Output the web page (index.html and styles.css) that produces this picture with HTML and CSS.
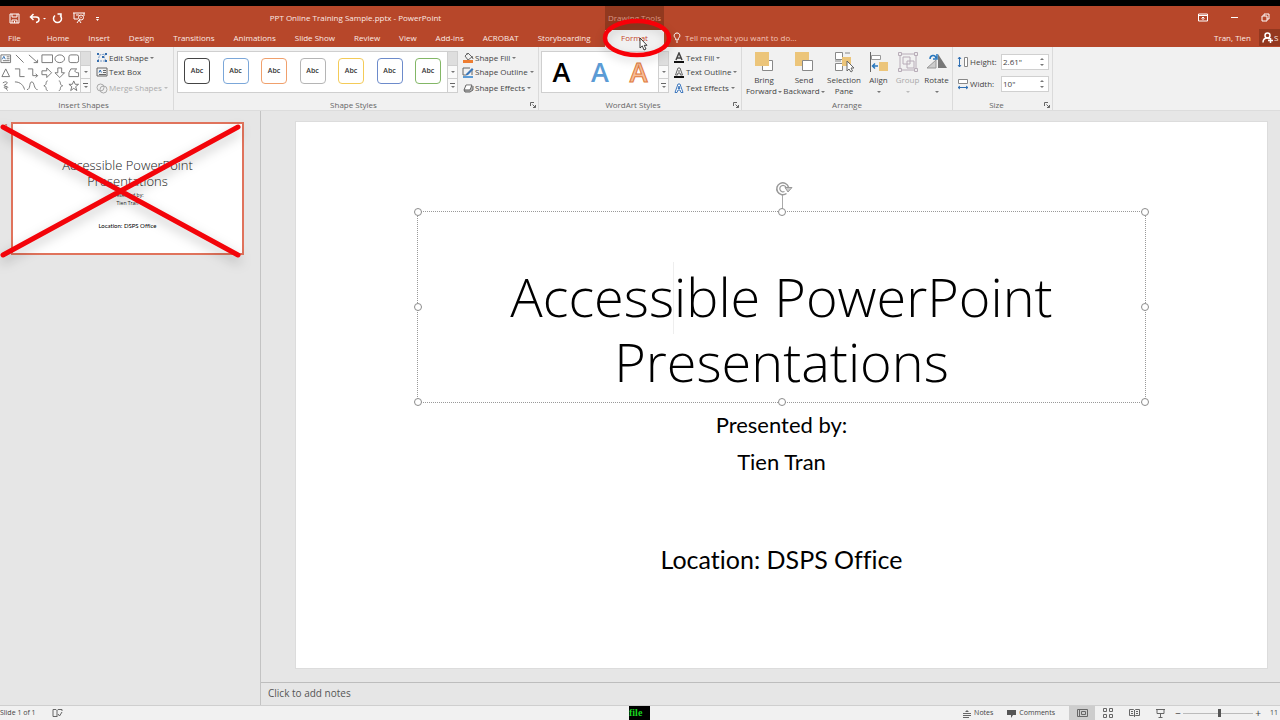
FILE: index.html
```html
<!DOCTYPE html>
<html lang="en">
<head>
<meta charset="utf-8">
<title>PPT Online Training Sample.pptx - PowerPoint</title>
<link rel="stylesheet" href="styles.css">
</head>
<body>
<div class="app">
  <header class="header">
    <div class="header-main">
      <div class="titlebar">
        <div class="quick">
          <button aria-label="Save"><svg width="11" height="11" viewBox="0 0 11 11"><path d="M1 1h9v9H1zM3 1v3h5V1M3 10V7h5v3" class="w"/><path d="M5 8h1v2H5z" fill="#fff"/></svg></button>
          <button class="undo" aria-label="Undo"><svg width="18" height="11" viewBox="0 0 18 11"><path d="M4.500 1 1.500 4l3 3M2 4h5c4 0 4 5 0 5.500" class="w b"/><path d="M14 5h3l-1.500 1.500z" fill="#fff"/></svg></button>
          <button class="redo" aria-label="Redo"><svg width="11" height="11" viewBox="0 0 11 11"><path d="M3 2.500a4 4 0 1 0 5 0M5.500 1h3.500v3.500" class="w b"/></svg></button>
          <button class="present" aria-label="Start presentation"><svg width="12" height="12" viewBox="0 0 12 12"><path d="M0 1h12M1 1v6h4M11 1v3M4 11l2-3 2 3M3 3h3" class="w"/><circle cx="8" cy="5.500" r="2.500" class="w"/><path d="M7.500 4.500v2l1.500-1z" fill="#fff"/></svg></button>
          <button aria-label="Customize toolbar"><svg width="7" height="9" viewBox="0 0 7 9"><path d="M2 3.500h3" class="w"/><path d="M2 5h3L3.500 7z" fill="#fff"/></svg></button>
        </div>
        <span class="doc-title">PPT Online Training Sample.pptx - PowerPoint</span>
      </div>
      <nav class="tabs">
        <button class="file">File</button><button>Home</button><button>Insert</button><button>Design</button><button>Transitions</button><button>Animations</button><button>Slide Show</button><button>Review</button><button>View</button><button>Add-ins</button><button>ACROBAT</button><button>Storyboarding</button>
      </nav>
    </div>
    <div class="context">
      <span class="context-label">Drawing Tools</span>
      <button class="format">Format</button>
      <svg class="ring" width="72" height="48" viewBox="0 0 72 48"><ellipse cx="36" cy="21" rx="32" ry="17" fill="none" stroke="#f80008" stroke-width="4.500"/></svg>
      <svg class="pointer" width="9" height="14" viewBox="0 0 9 14"><path d="M1 1v10l2.300-2.100L5 13l2-1-1.800-3.700H8z" fill="#fff" stroke="#111" stroke-width=".8"/></svg>
    </div>
    <div class="header-side">
      <div class="window-buttons">
        <button aria-label="Ribbon display options"><svg width="10" height="9" viewBox="0 0 10 9"><path d="M.5 1h9v7h-9zM.5 2.500h9M5 7V4M3.500 5.500 5 4l1.500 1.500" class="w"/></svg></button>
        <button aria-label="Minimize"><svg width="9" height="9" viewBox="0 0 9 9"><path d="M1 4.500h7" class="w"/></svg></button>
        <button aria-label="Restore"><svg width="9" height="9" viewBox="0 0 9 9"><path d="M1 3h5v5H1zM3 3V1h5v5H6" class="w"/></svg></button>
      </div>
      <div class="account-row">
        <button class="tell"><svg width="8" height="11" viewBox="0 0 8 11"><path d="M2.800 8V6.500C0 4.500 1 1 4 1s4 3.500 1.200 5.500V8zM3 10h2" class="w"/></svg>Tell me what you want to do...</button>
        <span class="user">Tran, Tien</span>
        <button class="share" aria-label="Share"><svg width="11" height="11" viewBox="0 0 11 11"><circle cx="5.500" cy="3.500" r="2.500" class="w b"/><path d="M1 10.500c0-3 2-4.500 4.500-4.500 1 0 1.500.5 2 1M8.500 6v5M6 8.500h5" class="w b"/></svg>S</button>
      </div>
    </div>
  </header>

  <section class="ribbon" aria-label="Format">
    <div class="group insert">
      <div class="group-body">
        <div class="gallery shapes">
          <div class="shape-grid">
            <button aria-label="Text box"><svg viewBox="0 0 14 14"><path d="M2 3h10v8H2zM8 5h3M8 7h3M4 9h7"/><path d="m3.500 7.500 1.500-3 1.500 3" class="blue"/></svg></button>
            <button aria-label="Line"><svg viewBox="0 0 14 14"><path d="m3 3 8 8"/></svg></button>
            <button aria-label="Arrow"><svg viewBox="0 0 14 14"><path d="m3 3 9 8M12 8v3H8"/></svg></button>
            <button aria-label="Rectangle"><svg viewBox="0 0 14 14"><path d="M2 3h11v8H2z"/></svg></button>
            <button aria-label="Oval"><svg viewBox="0 0 14 14"><ellipse cx="7" cy="7" rx="5" ry="4"/></svg></button>
            <button aria-label="Rounded rectangle"><svg viewBox="0 0 14 14"><rect x="2" y="3" width="10" height="8" rx="2"/></svg></button>
            <button aria-label="Triangle"><svg viewBox="0 0 14 14"><path d="m7 3 4 8H3z"/></svg></button>
            <button aria-label="Elbow connector"><svg viewBox="0 0 14 14"><path d="M2 3h5v8h5"/></svg></button>
            <button aria-label="Elbow arrow"><svg viewBox="0 0 14 14"><path d="M2 3h5v7h5M10 8l2 2-2 2"/></svg></button>
            <button aria-label="Right arrow"><svg viewBox="0 0 14 14"><path d="M2 5h5V2l5 5-5 5V9H2z"/></svg></button>
            <button aria-label="Down arrow"><svg viewBox="0 0 14 14"><path d="M5 2h4v5h3l-5 5-5-5h3z"/></svg></button>
            <button aria-label="Freeform"><svg viewBox="0 0 14 14"><path d="M4 3h6c-3 2-2 4 2 4v4H2V7z"/></svg></button>
            <button aria-label="Scribble"><svg viewBox="0 0 14 14"><path d="M4 4c5-3 6 1 2 2-3 2 4 1 3 3s-5 0-3-1 1 3 3 4"/></svg></button>
            <button aria-label="Arc"><svg viewBox="0 0 14 14"><path d="M2 3c6 0 9 4 10 8"/></svg></button>
            <button aria-label="Curve"><svg viewBox="0 0 14 14"><path d="M1 11c4 0 2-8 5-8s2 8 6 8"/></svg></button>
            <button aria-label="Left brace"><svg viewBox="0 0 14 14"><path d="M8 2C5 2 8 6 4 7c4 1 1 5 4 5"/></svg></button>
            <button aria-label="Right brace"><svg viewBox="0 0 14 14"><path d="M6 2c3 0 0 4 4 5-4 1-1 5-4 5"/></svg></button>
            <button aria-label="Star"><svg viewBox="0 0 14 14"><path d="m7 2 1.500 3.500H12L9 8l1.200 4L7 9.700 3.800 12 5 8 2 5.500h3.500z"/></svg></button>
          </div>
          <div class="scroll"><button class="off" aria-label="Previous row"></button><button aria-label="Next row"><i></i></button><button class="more" aria-label="More shapes"><i></i></button></div>
        </div>
        <div class="commands">
          <button><svg width="12" height="11" viewBox="0 0 12 11"><path d="M2 9 3.500 3l6-1L8 5l2 4z" fill="none" stroke="#6d93c2" stroke-dasharray="2 1"/><path d="M1 1h2v2H1zM9 1h2v2H9zM1 8h2v2H1zM9 8h2v2H9zM6 4h2v2H6z" fill="#356eae"/></svg>Edit Shape<i></i></button>
          <button><svg width="12" height="11" viewBox="0 0 12 11"><path d="M1 1h10v8H1zM7 3.500h3M7 5.500h3M3 7.500h7" class="g"/><path d="m3 5.500 1.200-2.500 1.200 2.500" class="bl"/></svg>Text Box</button>
          <button class="disabled" disabled><svg width="12" height="11" viewBox="0 0 12 11"><circle cx="4.500" cy="4.500" r="3.500" class="lg"/><circle cx="7.500" cy="6.500" r="3.500" class="lg"/></svg>Merge Shapes<i></i></button>
        </div>
      </div>
      <div class="group-label"><span>Insert Shapes</span></div>
    </div>

    <div class="group styles">
      <div class="group-body">
        <div class="gallery">
          <div class="style-items">
            <button class="st black">Abc</button><button class="st blue1">Abc</button><button class="st orange">Abc</button><button class="st grey">Abc</button><button class="st gold">Abc</button><button class="st blue2">Abc</button><button class="st green">Abc</button>
          </div>
          <div class="scroll"><button class="off" aria-label="Previous row"></button><button aria-label="Next row"><i></i></button><button class="more" aria-label="More styles"><i></i></button></div>
        </div>
        <div class="commands">
          <button><svg width="12" height="11" viewBox="0 0 12 11"><path d="m3 4 3-3 4 4-4 3zM5 3V1M10 4l1 3" class="g"/><path d="M1 8h10v3H1z" fill="#ed7d31"/></svg>Shape Fill<i></i></button>
          <button><svg width="12" height="11" viewBox="0 0 12 11"><path d="M8 1H1v7h3M10 3v5" class="g"/><path d="m4 7 6-6 1.500 1.500L6 8l-2 .5z" fill="#3c77b8"/><path d="M1 9h10v2H1z" fill="#5b9bd5"/></svg>Shape Outline<i></i></button>
          <button><svg width="12" height="11" viewBox="0 0 12 11"><path d="m2 7 2-5h6L8 7zM2 7l1 2h5l3-2V3" fill="#b5b5b5" stroke="#666"/><path d="m3 6 1.500-3.500H9L7.500 6z" fill="#fff"/></svg>Shape Effects<i></i></button>
        </div>
      </div>
      <div class="group-label"><span>Shape Styles</span><button class="launcher" aria-label="Shape style options"><svg width="6" height="6" viewBox="0 0 6 6"><path d="M.5 4V.5H4M2.500 2.500l3 3M5.500 3v2.500H3" class="g"/></svg></button></div>
    </div>

    <div class="group wordart">
      <div class="group-body">
        <div class="gallery">
          <div class="wa-items"><button class="wa a1">A</button><button class="wa a2">A</button><button class="wa a3">A</button></div>
          <div class="scroll"><button class="off" aria-label="Previous row"></button><button aria-label="Next row"><i></i></button><button class="more" aria-label="More WordArt styles"><i></i></button></div>
        </div>
        <div class="commands">
          <button><svg width="12" height="11" viewBox="0 0 12 11"><path d="m3 8 3-7 3 7M4 6h4" fill="none" stroke="#444" stroke-width="1.500"/><path d="M1 9h10v2H1z" fill="#111"/></svg>Text Fill<i></i></button>
          <button><svg width="12" height="11" viewBox="0 0 12 11"><path d="M2.500 8 5 1h2l2.500 7h-2L7 6H5l-.5 2zM6 3v2" class="g"/><path d="M1 9h10v2H1z" fill="#111"/></svg>Text Outline<i></i></button>
          <button><svg width="12" height="11" viewBox="0 0 12 11"><path d="m2 9.500 3-8.500h2l3 8.500H8L7 7H5l-1 2.500zM6 3 5 5.500h2z" fill="#fff" stroke="#3f78bd"/></svg>Text Effects<i></i></button>
        </div>
      </div>
      <div class="group-label"><span>WordArt Styles</span><button class="launcher" aria-label="Text options"><svg width="6" height="6" viewBox="0 0 6 6"><path d="M.5 4V.5H4M2.500 2.500l3 3M5.500 3v2.500H3" class="g"/></svg></button></div>
    </div>

    <div class="group arrange">
      <div class="group-body">
        <button class="large wide"><svg width="22" height="22" viewBox="0 0 22 22"><path d="M9.500 9.500h10v10h-10z" fill="#fff" stroke="#888"/><path d="M2 1h14v14H2z" fill="#ecc57a"/></svg><span>Bring</span><span>Forward<i></i></span></button>
        <button class="large wide"><svg width="22" height="22" viewBox="0 0 22 22"><path d="M2 1h14v14H2z" fill="#ecc57a"/><path d="M9.500 9.500h10v10h-10z" fill="#fff" stroke="#888"/></svg><span>Send</span><span>Backward<i></i></span></button>
        <button class="large wide"><svg width="22" height="22" viewBox="0 0 22 22"><path d="M2.500 1.500h7v7h-7zM2.500 12.500h7v7h-7zM12 2h5M2 10h6" fill="#fff" stroke="#888"/><path d="M9 6h9v9H9z" fill="#ecc57a"/><path d="M14 10v10l2-2 2 3 1.500-1-1.500-3h3z" fill="#fff" stroke="#666"/></svg><span>Selection</span><span>Pane</span></button>
        <button class="large narrow"><svg width="22" height="22" viewBox="0 0 22 22"><path d="M2.500 1v20" class="g"/><path d="M3.500 4.500h9v4h-9z" fill="#fff" stroke="#999"/><path d="M11 11h9v9h-9z" fill="#ecc57a"/><path d="M10 15H5M7 12.500 4.500 15 7 17.500" fill="none" stroke="#2877bd" stroke-width="1.500"/></svg><span>Align</span><span><i></i></span></button>
        <button class="large narrow disabled" disabled><svg width="22" height="22" viewBox="0 0 22 22"><path d="M3 3h16v16H3zM6 6h7v7H6zM10 10h7v7h-7z" fill="none" stroke="#b8acb8"/><path d="M1.500 1.500h3v3h-3zM17.500 1.500h3v3h-3zM1.500 17.500h3v3h-3zM17.500 17.500h3v3h-3z" fill="#eee" stroke="#b8acb8"/></svg><span>Group</span><span><i></i></span></button>
        <button class="large narrow"><svg width="22" height="22" viewBox="0 0 22 22"><path d="M1 17h9V9z" fill="#ccc" stroke="#999"/><path d="M12 17V3l9 14z" fill="#777"/><path d="M4 8c0-4 5-5 6-1M11 3v5H7" fill="none" stroke="#2877bd" stroke-width="1.500"/></svg><span>Rotate</span><span><i></i></span></button>
      </div>
      <div class="group-label"><span>Arrange</span></div>
    </div>

    <div class="group size">
      <div class="group-body">
        <label for="h"><svg width="12" height="12" viewBox="0 0 12 12"><path d="M7.500 1.500h3v9h-3z" fill="#fff" stroke="#888"/><path d="M2.500 1v10M1 3l1.500-2L4 3M1 9l1.500 2L4 9" class="bl"/></svg>Height:</label>
        <div class="spin"><input id="h" type="text" value="2.61&quot;"><span><i class="up"></i><i></i></span></div>
        <label for="w"><svg width="12" height="12" viewBox="0 0 12 12"><path d="M1.500 1.500h9v4h-9z" fill="#fff" stroke="#888"/><path d="M1 9.500h10M3 8 1 9.500 3 11M9 8l2 1.500L9 11" class="bl"/></svg>Width:</label>
        <div class="spin"><input id="w" type="text" value="10&quot;"><span><i class="up"></i><i></i></span></div>
      </div>
      <div class="group-label"><span>Size</span><button class="launcher" aria-label="Size options"><svg width="6" height="6" viewBox="0 0 6 6"><path d="M.5 4V.5H4M2.500 2.500l3 3M5.500 3v2.500H3" class="g"/></svg></button></div>
    </div>
  </section>

  <main class="workspace">
    <aside class="panel">
      <span class="num">1</span>
      <div class="thumb">
        <p class="t-title">Accessible PowerPoint<br>Presentations</p>
        <p class="t-sub">Presented by:<br>Tien Tran</p>
        <p class="t-loc">Location: DSPS Office</p>
      </div>
      <svg class="cross" width="248" height="146" viewBox="0 0 248 146"><path d="m3 7 235 128M238 7 3 135" stroke="#f3040a" stroke-width="5" stroke-linecap="round"/></svg>
    </aside>
    <div class="editor">
      <div class="stage">
        <article class="slide">
          <div class="title-box">
            <span class="caret"></span>
            <h1>Accessible PowerPoint<br>Presentations</h1>
            <span class="stem"></span>
            <svg class="rotate" width="18" height="16" viewBox="0 0 18 16"><path d="M11.500 12.500A6 6 0 1 1 13.500 6" fill="none" stroke="#999" stroke-width="1.500"/><path d="M9.500 10.500a3.200 3.200 0 1 1 1.500-4" fill="none" stroke="#999" stroke-width="1.200"/><path d="M10 6.500h7L13 11z" fill="#ccc" stroke="#999"/></svg>
            <b class="n w-"></b><b class="n c-"></b><b class="n e-"></b><b class="m w-"></b><b class="m e-"></b><b class="s w-"></b><b class="s c-"></b><b class="s e-"></b>
          </div>
          <div class="sub"><p>Presented by:</p><p>Tien Tran</p></div>
          <p class="location">Location: DSPS Office</p>
        </article>
      </div>
      <div class="notes">Click to add notes</div>
    </div>
  </main>

  <footer class="status">
    <span class="count">Slide 1 of 1</span>
    <button aria-label="Spelling"><svg width="11" height="10" viewBox="0 0 11 10"><path d="M5 8.500H1v-7h3l1 1 1-1h4V3M5 2.500V9M6 6l1.500 2L10 4" class="g"/></svg></button>
    <span class="cc">file</span>
    <div class="status-tools">
      <button class="lab"><svg width="8" height="9" viewBox="0 0 8 9"><path d="M0 4.500h8M0 6.500h8M0 8.500h6" class="g"/><path d="m2 3 2-2 2 2z" fill="#666"/></svg>Notes</button>
      <button class="lab comments"><svg width="9" height="9" viewBox="0 0 9 9"><path d="M0 1h9v5H6L4 9V6H0z" fill="#555"/></svg>Comments</button>
      <button class="view on" aria-label="Normal"><svg width="11" height="10" viewBox="0 0 11 10"><path d="M.5 1.500h10v7H.5zM2.500 1.500v7M4.500 3.500h4v3h-4z" class="g"/></svg></button>
      <button class="view" aria-label="Slide sorter"><svg width="11" height="10" viewBox="0 0 11 10"><path d="M.5.500h3v3h-3zM6.500.500h3v3h-3zM.5 6.500h3v3h-3zM6.500 6.500h3v3h-3z" class="g"/></svg></button>
      <button class="view" aria-label="Reading view"><svg width="11" height="10" viewBox="0 0 11 10"><path d="M5.500 2v7M.5 1.500h4l1 1 1-1h4v6h-4l-1 1-1-1h-4zM2 3.500h2M2 5.500h2M7 3.500h2M7 5.500h2" class="g"/></svg></button>
      <button class="view" aria-label="Slide show"><svg width="11" height="10" viewBox="0 0 11 10"><path d="M1 1.500h9M2 1.500v4h7v-4M5.500 5.500V9M3.500 9.500h4" class="g"/></svg></button>
      <button class="zoom-b" aria-label="Zoom out">−</button>
      <input class="zoom" type="range" aria-label="Zoom" value="52">
      <button class="zoom-b" aria-label="Zoom in">+</button>
      <span class="pct">11</span>
    </div>
  </footer>
</div>
</body>
</html>
```
FILE: styles.css
```css
* { box-sizing: border-box; }
body { margin: 0; font-family: "Open Sans", "Noto Sans", sans-serif; font-size: 8px; line-height: 12px; color: #444; font-variant-ligatures: none; }
button { font: inherit; color: inherit; background: none; border: 0; padding: 0; margin: 0; white-space: nowrap; }
p, h1 { margin: 0; }
svg { flex: none; fill: none; }
.w { stroke: #fff; fill: none; }
.b { stroke-width: 1.5; }
.g { stroke: #666; fill: none; }
.lg { stroke: #aaa; fill: none; }
.bl { stroke: #2f6fb3; fill: none; }
.app { height: 100vh; display: flex; flex-direction: column; overflow: hidden; border-top: 6px solid #000; background: #e6e6e6; }

.header { display: flex; height: 41px; flex: none; background: #b7472a; color: #fbe9e4; }
.header-main { width: 605px; flex: none; }
.titlebar { display: flex; align-items: center; height: 24px; }
.quick { display: flex; align-items: center; width: 106px; height: 22px; padding-left: 9px; gap: 9px; }
.quick button, .window-buttons button { display: flex; }
.quick .redo { margin-left: -4px; }
.quick .present { margin-left: 1px; }
.doc-title { flex: 1; text-align: center; }
.tabs { display: flex; height: 16px; padding-left: 8px; gap: 19px; }
.file { margin-right: 7px; }
.context { position: relative; width: 59px; flex: none; display: flex; flex-direction: column; text-align: center; z-index: 2; }
.context-label { height: 24px; line-height: 24px; background: #92391f; color: #d99583; }
.format { height: 17px; padding-bottom: 1px; background: #f1f1f1; color: #c5482b; }
.ring { position: absolute; left: -4px; top: 11px; filter: drop-shadow(0 4px 4px rgba(0,0,0,.15)); }
.pointer { position: absolute; left: 34px; top: 31px; }
.header-side { flex: 1; min-width: 0; }
.window-buttons { display: flex; justify-content: flex-end; align-items: center; gap: 22px; height: 22px; padding-right: 10px; }
.account-row { display: flex; align-items: center; height: 19px; }
.tell { display: flex; align-items: center; gap: 4px; padding-left: 9px; margin-right: auto; color: #f2c4b8; }
.user { margin-right: 8px; }
.share { display: flex; align-items: center; gap: 1px; width: 21px; height: 17px; padding-left: 3px; background: #94381f; }

.ribbon { display: flex; height: 64px; flex: none; background: #f1f1f1; border-bottom: 1px solid #dcdcdc; }
.group { display: flex; flex-direction: column; padding-top: 4px; border-right: 1px solid #dadada; flex: none; }
.insert { width: 174px; }
.styles { width: 365px; padding-left: 3px; }
.wordart { width: 203px; padding-left: 2px; }
.arrange { width: 211px; }
.size { width: 100px; }
.group-body { display: flex; height: 48px; gap: 5px; }
.group-label { display: flex; align-items: center; height: 11px; line-height: 11px; color: #666; }
.group-label span { flex: 1; text-align: center; }
.insert .group-label { padding-right: 6px; }
.wordart .group-label span { padding-right: 8px; }
.launcher { display: flex; width: 8px; }
.gallery { display: flex; height: 42px; background: #fff; border: 1px solid #cfcfcf; }
.shapes { width: 93px; margin-left: -2px; }
.shape-grid { display: grid; flex: 1; grid-template-columns: repeat(6, 1fr); grid-template-rows: repeat(3, 1fr); }
.shape-grid button { display: flex; }
.shape-grid svg { width: 100%; height: 100%; stroke: #777; }
.shape-grid .blue { stroke: #2f6fb3; }
.scroll { width: 10px; display: flex; flex-direction: column; border-left: 1px solid #cfcfcf; background: #fafafa; }
.scroll button { flex: 1; display: flex; flex-direction: column; align-items: center; justify-content: center; border-bottom: 1px solid #cfcfcf; }
.scroll button:last-child { border-bottom: 0; }
.scroll .off { background: #dedede; }
.scroll .more::before { content: ""; width: 5px; height: 1px; background: #666; margin-bottom: 2px; }
i { display: inline-block; border: 2px solid transparent; border-top-color: #777; border-bottom: 0; flex: none; }
.commands { display: flex; flex-direction: column; }
.commands button { display: flex; align-items: center; height: 16px; gap: 1px; }
.commands button:nth-child(1) { height: 13px; }
.commands i { margin-left: 1px; }
.styles .gallery { margin-right: -1px; }
.wordart .gallery { margin-right: -1px; }
.disabled { color: #aaa; }
.disabled i { border-top-color: #bbb; }
.style-items { width: 269px; display: flex; align-items: center; justify-content: space-between; padding: 0 6px 2px; }
.st { width: 26px; height: 26px; border: 1px solid #444; border-radius: 4px; font-size: 7px; font-weight: 600; color: #333; }
.blue1 { border-color: #7ba7d9; } .orange { border-color: #f0a06c; } .grey { border-color: #b5b5b5; }
.gold { border-color: #f4cb58; } .blue2 { border-color: #6d8bcb; } .green { border-color: #83b766; }
.wa-items { width: 116px; display: flex; align-items: center; }
.wa { flex: 1; font-size: 27px; line-height: 40px; font-weight: 600; }
.a1 { color: #000; } .a2 { color: #5b9bd5; } .a3 { color: #f6bd98; -webkit-text-stroke: 1px #e17b3d; }
.arrange .group-body { gap: 0; padding-left: 2px; }
.large { display: flex; flex-direction: column; align-items: center; line-height: 11px; }
.large svg { margin-bottom: 1px; }
.large span { height: 11px; }
.large i { margin-left: 1px; vertical-align: middle; }
.wide { width: 40px; } .narrow { width: 29px; }
.size .group-body { display: grid; grid-template-columns: 38px 48px; grid-template-rows: 16px 16px; gap: 6px; padding: 3px 4px 0; }
.size .group-label span { padding-right: 4px; }
.size label { display: flex; align-items: center; gap: 1px; }
.spin { display: flex; align-items: center; background: #fff; border: 1px solid #d0d0d0; padding-right: 3px; }
.spin input { width: 38px; min-width: 0; font: inherit; color: #444; border: 0; padding: 0 1px; background: none; outline: 0; }
.spin span { display: flex; flex-direction: column; gap: 4px; }
.up { transform: rotate(180deg); }

.workspace { flex: 1; min-height: 0; display: flex; }
.panel { position: relative; width: 261px; display: flex; align-items: flex-start; padding: 11px 16px 0 4px; border-right: 1px solid #c3c3c3; }
.num { width: 7px; line-height: 8px; color: #d24726; }
.thumb { flex: 1; aspect-ratio: 234 / 134; border: 2px solid #e0735c; background: #fff; text-align: center; color: #222; font-family: "Open Sans", sans-serif; padding-top: 33px; }
.t-title { font-size: 13px; line-height: 16px; font-weight: 300; }
.t-sub { font-size: 5px; line-height: 8px; padding-top: 2px; }
.t-loc { font-family: Lato, sans-serif; font-size: 6px; line-height: 8px; padding-top: 15px; color: #000; }
.cross { position: absolute; left: 0; top: 9px; filter: drop-shadow(0 5px 6px rgba(0,0,0,.25)); }
.editor { flex: 1; min-width: 0; display: flex; flex-direction: column; }
.stage { flex: 1; padding: 11px 13px 14px 35px; display: flex; }
.slide { flex: 1; background: #fff; box-shadow: 0 0 0 1px #dcdcdc; padding-top: 89px; color: #000; font-family: Lato, sans-serif; text-align: center; }
.title-box { position: relative; width: 75%; height: 192px; margin: 0 auto; border: 1px dotted #999; display: flex; align-items: flex-end; justify-content: center; padding-bottom: 8px; }
h1 { position: relative; font-family: "Open Sans", sans-serif; font-size: 54px; line-height: 65px; font-weight: 300; white-space: nowrap; }
.title-box b { position: absolute; width: 8px; height: 8px; border: 1px solid #8c8c8c; border-radius: 50%; background: #fff; transform: translate(-50%, -50%); }
.n { top: 0; } .m { top: 50%; } .s { top: 100%; }
.w- { left: 0; } .c- { left: 50%; } .e- { left: 100%; }
.stem { position: absolute; left: 50%; top: -17px; height: 17px; border-left: 1px solid #aaa; }
.rotate { position: absolute; left: calc(50% - 7px); top: -31px; }
.caret { position: absolute; left: 35%; top: 50px; height: 72px; border-left: 1px solid #eee; }
.sub { font-size: 22px; line-height: 37px; padding-top: 3px; }
.location { font-size: 25px; line-height: 36px; padding-top: 61px; }
.notes { height: 23px; border-top: 1px solid #bdbdbd; padding-left: 7px; font-size: 10px; line-height: 21px; color: #555; }

.status { height: 15px; flex: none; display: flex; align-items: center; background: #f1f1f1; border-top: 1px solid #cfcfcf; font-size: 7px; }
.count { width: 52px; }
.status button { display: flex; align-items: center; }
.cc { margin-left: 566px; width: 21px; height: 14px; background: #000; color: #19d51e; font: bold 10px/14px "Liberation Serif", serif; }
.status-tools { display: flex; align-items: center; margin-left: auto; height: 14px; }
.lab { gap: 3px; }
.comments { margin: 0 14px; }
.view { width: 26px; height: 14px; justify-content: center; }
.on { background: #cdcdcd; }
.zoom-b { width: 10px; justify-content: center; font-size: 10px; }
.zoom { width: 70px; height: 10px; margin: 0; appearance: none; background: linear-gradient(#bbb, #bbb) center / 100% 1px no-repeat; }
.zoom::-webkit-slider-thumb { appearance: none; width: 3px; height: 8px; background: #555; }
.pct { width: 10px; margin-left: 7px; }
```
